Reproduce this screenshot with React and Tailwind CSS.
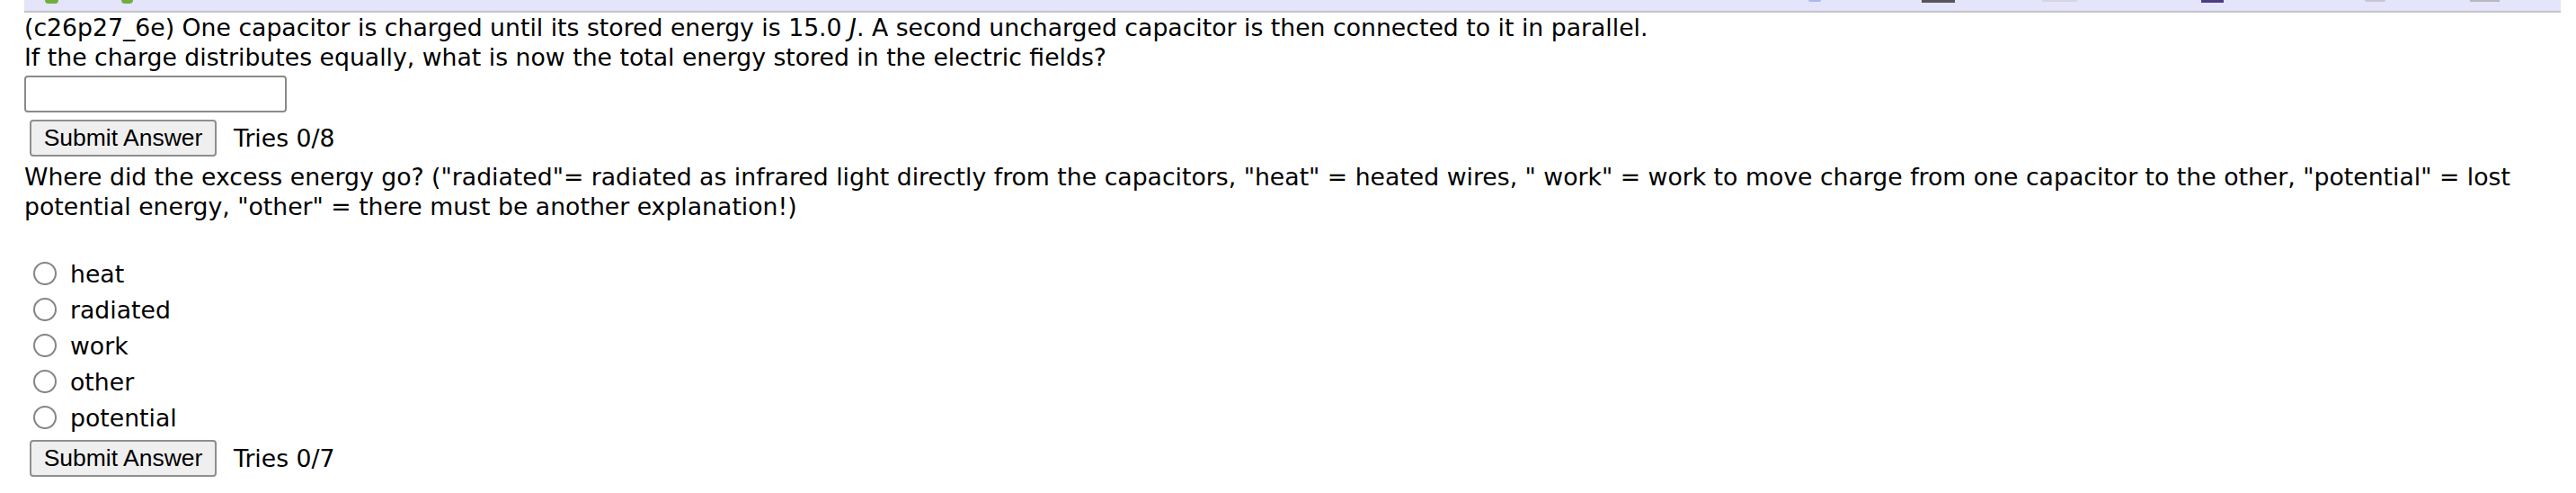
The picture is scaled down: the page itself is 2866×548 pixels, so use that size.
import React from "react";

const options = ["heat", "radiated", "work", "other", "potential"];

const SubmitRow = ({ tries }) => (
  <div className="flex items-center h-[41px] ml-[6px]">
    <button className="h-[41px] w-[208px] rounded-[4px] border-2 border-[#8f8f8f] bg-[#efefef] text-[26.5px] text-black font-['Liberation_Sans',Arial,sans-serif] leading-none">
      Submit Answer
    </button>
    <span className="ml-[19px]">Tries {tries}</span>
  </div>
);

export default function App() {
  return (
    <div className="min-h-[548px] bg-white text-black font-['DejaVu_Sans',Verdana,sans-serif] text-[26.7px] leading-[33px]">
      <div className="ml-[27px] w-[2822px]">
        {/* toolbar strip, mostly scrolled off */}
        <div className="h-[14px] bg-[#e4e4fa] border-b-2 border-[#c4c4c8] flex items-start">
          <div className="ml-[23px] w-[15px] h-[4px] rounded-b-full bg-[#6fae3c]" />
          <div className="ml-[70px] w-[13px] h-[4px] rounded-b-full bg-[#6fae3c]" />
          <div className="ml-[1864px] w-[14px] h-[2px] rounded-b-full bg-[#a9b8ee]" />
          <div className="ml-[112px] w-[37px] h-[3px] bg-[#55555a]" />
          <div className="ml-[97px] w-[39px] h-[2px] bg-[#d6d6dc]" />
          <div className="ml-[138px] w-[25px] h-[3px] bg-[#4a3f86]" />
          <div className="ml-[157px] w-[23px] h-[2px] rounded-b-full bg-[#c6c6cc]" />
          <div className="ml-[94px] w-[33px] h-[2px] bg-[#b8b8bc]" />
        </div>

        <div>
          (c26p27_6e) One capacitor is charged until its stored energy is 15.0 <i>J</i>. A second
          uncharged capacitor is then connected to it in parallel.
        </div>
        <div>If the charge distributes equally, what is now the total energy stored in the electric fields?</div>

        <div className="mt-[4px] h-[41px] w-[292px] rounded-[4px] border-2 border-[#8a8a8a] bg-white" />

        <div className="mt-[8px]">
          <SubmitRow tries="0/8" />
        </div>

        <p className="mt-[6px] w-[2800px]">
          Where did the excess energy go? ("radiated"= radiated as infrared light directly from the capacitors,
          "heat" = heated wires, " work" = work to move charge from one capacitor to the other, "potential" = lost
          potential energy, "other" = there must be another explanation!)
        </p>

        <div className="mt-[38px] flex flex-col">
          {options.map((o) => (
            <label key={o} className="flex items-center h-[40px]">
              <span className="ml-[10px] w-[26px] h-[26px] rounded-full border-2 border-[#858585] bg-white" />
              <span className="ml-[15px]">{o}</span>
            </label>
          ))}
        </div>

        <div className="mt-[5px]">
          <SubmitRow tries="0/7" />
        </div>
      </div>
    </div>
  );
}
